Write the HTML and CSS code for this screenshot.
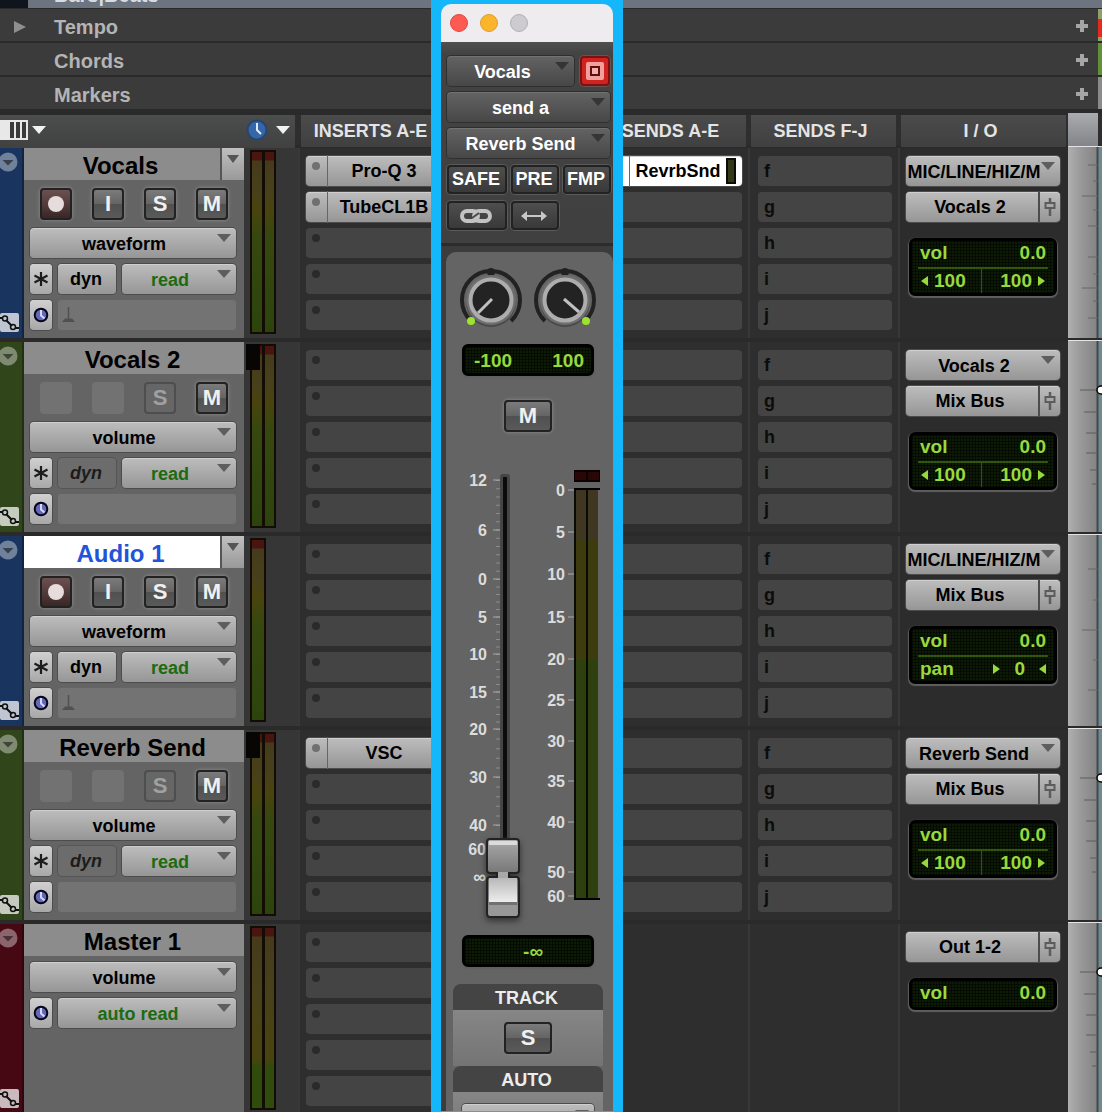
FILE: index.html
```html
<!DOCTYPE html>
<html lang="en">
<head>
    <meta charset="UTF-8">
    <meta name="viewport" content="width=device-width, initial-scale=1.0">
    <title>Session - Edit Window</title>
    <link rel="stylesheet" href="styles.css">
</head>
<body>

    <!-- shared icons -->
    <svg class="defs" width="0" height="0" aria-hidden="true">
        <symbol id="i-collapse" viewBox="0 0 20 20">
            <circle cx="10" cy="10" r="9.5" fill="#fff" fill-opacity=".38"/>
            <path d="M4.500 8h11l-5.500 5.500z" fill="#000" fill-opacity=".5"/>
        </symbol>
        <symbol id="i-auto" viewBox="0 0 20 20">
            <rect width="19" height="19" rx="2" fill="#fff" fill-opacity=".72"/>
            <path d="M0 5h3M6 7l6 6M15 15h4" fill="none" stroke="#111" stroke-width="2"/>
            <circle cx="5" cy="5.500" r="2.500" fill="none" stroke="#111" stroke-width="1.500"/>
            <circle cx="13" cy="14" r="2.500" fill="none" stroke="#111" stroke-width="1.500"/>
        </symbol>
        <symbol id="i-star" viewBox="0 0 16 16">
            <path d="M8 1v14M1.500 4.500l13 7M14.500 4.500l-13 7" stroke="#1c1c1c" stroke-width="2.200"/>
        </symbol>
        <symbol id="i-clock" viewBox="0 0 16 16">
            <circle cx="8" cy="8" r="6.300" fill="#6468b4" stroke="#04041c" stroke-width="2"/>
            <path d="M8 3v5.500l3.500 3" fill="none" stroke="#d5d7ff" stroke-width="2"/>
        </symbol>
        <symbol id="i-rec" viewBox="0 0 18 18"><circle cx="9" cy="9" r="8" fill="#e6dcdc"/></symbol>
        <symbol id="i-metro" viewBox="0 0 16 18">
            <path d="M7.500 1v12" stroke="#505050" stroke-width="1.500"/>
            <path d="M4 12.500h7l3 3.500H1z" fill="#505050"/>
        </symbol>
        <symbol id="i-fader" viewBox="0 0 12 20">
            <path d="M6 1v18" stroke="#5c5c5c" stroke-width="2.500"/>
            <rect x="1.500" y="6" width="9" height="5" fill="#a8a8a8" stroke="#5c5c5c" stroke-width="2"/>
        </symbol>
        <symbol id="i-left" viewBox="0 0 7 10"><path d="M7 0v10L0 5z" fill="#98d93c"/></symbol>
        <symbol id="i-right" viewBox="0 0 7 10"><path d="M0 0v10l7-5z" fill="#98d93c"/></symbol>
        <symbol id="i-plus" viewBox="0 0 12 12"><path d="M6 0v12M0 6h12" stroke="#a6a6a6" stroke-width="4"/></symbol>
        <symbol id="i-down" viewBox="0 0 14 8"><path d="M0 0h14L7 8z" fill="#f2f2f2"/></symbol>
        <symbol id="i-wave-ruler" viewBox="0 0 34 190">
            <path d="M20 18h10M25 34h5M14 49h16M25 63h5M20 79h10M20 110h10M25 127h5M14 141h16M25 154h5M20 171h10" stroke="#666" stroke-width="1"/>
        </symbol>
        <symbol id="i-vol-ruler" viewBox="0 0 34 190">
            <path d="M12 49h18M16 71h14M18 92h12M18 112h12M22 129h8M24 143h6" stroke="#5c5c5c" stroke-width="1"/>
            <circle cx="33" cy="49" r="4" fill="#fff" stroke="#000" stroke-width="1.500"/>
        </symbol>
    </svg>

    <div class="rulers">
        <div class="ruler ruler-top"><span class="ruler-name">Bars|Beats</span></div>
        <div class="ruler">
            <button class="twist" aria-label="Expand tempo"><svg width="12" height="12" viewBox="0 0 12 12"><path d="M0 0v12l12-6z" fill="#8f8f8f"/></svg></button>
            <span class="ruler-name">Tempo</span>
            <button class="add" aria-label="Add tempo"><svg width="12" height="12"><use href="#i-plus"/></svg></button>
            <span class="edge edge-red"></span>
        </div>
        <div class="ruler">
            <span class="ruler-name">Chords</span>
            <button class="add" aria-label="Add chord"><svg width="12" height="12"><use href="#i-plus"/></svg></button>
            <span class="edge edge-green"></span>
        </div>
        <div class="ruler">
            <span class="ruler-name">Markers</span>
            <button class="add" aria-label="Add marker"><svg width="12" height="12"><use href="#i-plus"/></svg></button>
            <span class="edge"></span>
        </div>
    </div>

    <div class="row head">
        <div class="head-tools">
            <button aria-label="Track list view"><svg width="46" height="20" viewBox="0 0 46 20">
                <rect width="28" height="20" fill="#e8e8e8"/>
                <path d="M12 2v16M18 2v16M24 2v16" stroke="#3a3a3a" stroke-width="4"/>
                <path d="M32 6h14l-7 8z" fill="#f2f2f2"/>
            </svg></button>
            <button class="timebase" aria-label="Timebase"><svg width="22" height="22" viewBox="0 0 22 22">
                <circle cx="11" cy="11" r="9.500" fill="#3566a8" stroke="#26466f" stroke-width="2"/>
                <path d="M11 4v7l4 4" fill="none" stroke="#dce9ff" stroke-width="2"/>
            </svg></button>
            <button class="edit-menu" aria-label="Edit window menu"><svg width="14" height="8"><use href="#i-down"/></svg></button>
        </div>
        <div class="head-cell">INSERTS A-E</div>
        <div class="head-cell"></div>
        <div class="head-cell">SENDS A-E</div>
        <div class="head-cell">SENDS F-J</div>
        <div class="head-cell">I / O</div>
        <div class="head-end"></div>
    </div>

    <div class="row track blue">
        <div class="tab"><svg width="20" height="20"><use href="#i-collapse"/></svg><svg width="20" height="20"><use href="#i-auto"/></svg></div>
        <div class="strip">
            <div class="title"><span>Vocals</span><button class="title-menu" aria-label="Playlist"></button></div>
            <div class="keys">
                <button class="key rec" aria-label="Record"><svg width="18" height="18"><use href="#i-rec"/></svg></button>
                <button class="key">I</button>
                <button class="key">S</button>
                <button class="key">M</button>
            </div>
            <div class="line"><select class="pick" aria-label="Track view"><option>waveform</option></select></div>
            <div class="line">
                <button class="chip small" aria-label="Freeze"><svg width="16" height="16"><use href="#i-star"/></svg></button>
                <button class="chip dyn">dyn</button>
                <select class="pick green" aria-label="Automation mode"><option>read</option></select>
            </div>
            <div class="line">
                <button class="chip small" aria-label="Timebase"><svg width="16" height="16"><use href="#i-clock"/></svg></button>
                <div class="well"><svg width="16" height="18"><use href="#i-metro"/></svg></div>
            </div>
        </div>
        <div class="meter"><i></i><i></i></div>
        <div class="slots inserts">
            <button class="slot full"><span>Pro-Q 3</span></button>
            <button class="slot full"><span>TubeCL1B</span></button>
            <button class="slot" aria-label="Insert c"></button>
            <button class="slot" aria-label="Insert d"></button>
            <button class="slot" aria-label="Insert e"></button>
        </div>
        <div class="slots"></div>
        <div class="slots">
            <button class="slot full send"><span>RevrbSnd</span><b></b></button>
            <button class="slot" aria-label="Send b"></button>
            <button class="slot" aria-label="Send c"></button>
            <button class="slot" aria-label="Send d"></button>
            <button class="slot" aria-label="Send e"></button>
        </div>
        <div class="slots letters">
            <button class="slot">f</button>
            <button class="slot">g</button>
            <button class="slot">h</button>
            <button class="slot">i</button>
            <button class="slot">j</button>
        </div>
        <div class="io">
            <select class="pick" aria-label="Input"><option>MIC/LINE/HIZ/M</option></select>
            <div class="output"><button>Vocals 2</button><button aria-label="Output window"><svg width="12" height="20"><use href="#i-fader"/></svg></button></div>
            <div class="lcd">
                <div class="lcd-line"><span>vol</span><span>0.0</span></div>
                <div class="lcd-line pans"><span><svg width="7" height="10"><use href="#i-left"/></svg>100</span><span>100<svg width="7" height="10"><use href="#i-right"/></svg></span></div>
            </div>
        </div>
        <div class="scale"><svg width="34" height="190"><use href="#i-wave-ruler"/></svg></div>
    </div>

    <div class="row track olive">
        <div class="tab"><svg width="20" height="20"><use href="#i-collapse"/></svg><svg width="20" height="20"><use href="#i-auto"/></svg></div>
        <div class="strip">
            <div class="title"><span>Vocals 2</span></div>
            <div class="keys">
                <span class="blank"></span>
                <span class="blank"></span>
                <button class="key off">S</button>
                <button class="key">M</button>
            </div>
            <div class="line"><select class="pick" aria-label="Track view"><option>volume</option></select></div>
            <div class="line">
                <button class="chip small" aria-label="Freeze"><svg width="16" height="16"><use href="#i-star"/></svg></button>
                <button class="chip dyn off">dyn</button>
                <select class="pick green" aria-label="Automation mode"><option>read</option></select>
            </div>
            <div class="line">
                <button class="chip small" aria-label="Timebase"><svg width="16" height="16"><use href="#i-clock"/></svg></button>
                <div class="well"></div>
            </div>
        </div>
        <div class="meter notched"><i></i><i></i></div>
        <div class="slots inserts">
            <button class="slot" aria-label="Insert a"></button>
            <button class="slot" aria-label="Insert b"></button>
            <button class="slot" aria-label="Insert c"></button>
            <button class="slot" aria-label="Insert d"></button>
            <button class="slot" aria-label="Insert e"></button>
        </div>
        <div class="slots"></div>
        <div class="slots">
            <button class="slot" aria-label="Send a"></button>
            <button class="slot" aria-label="Send b"></button>
            <button class="slot" aria-label="Send c"></button>
            <button class="slot" aria-label="Send d"></button>
            <button class="slot" aria-label="Send e"></button>
        </div>
        <div class="slots letters">
            <button class="slot">f</button>
            <button class="slot">g</button>
            <button class="slot">h</button>
            <button class="slot">i</button>
            <button class="slot">j</button>
        </div>
        <div class="io">
            <select class="pick" aria-label="Input"><option>Vocals 2</option></select>
            <div class="output"><button>Mix Bus</button><button aria-label="Output window"><svg width="12" height="20"><use href="#i-fader"/></svg></button></div>
            <div class="lcd">
                <div class="lcd-line"><span>vol</span><span>0.0</span></div>
                <div class="lcd-line pans"><span><svg width="7" height="10"><use href="#i-left"/></svg>100</span><span>100<svg width="7" height="10"><use href="#i-right"/></svg></span></div>
            </div>
        </div>
        <div class="scale"><svg width="34" height="190"><use href="#i-vol-ruler"/></svg></div>
    </div>

    <div class="row track blue selected">
        <div class="tab"><svg width="20" height="20"><use href="#i-collapse"/></svg><svg width="20" height="20"><use href="#i-auto"/></svg></div>
        <div class="strip">
            <div class="title"><span>Audio 1</span><button class="title-menu" aria-label="Playlist"></button></div>
            <div class="keys">
                <button class="key rec" aria-label="Record"><svg width="18" height="18"><use href="#i-rec"/></svg></button>
                <button class="key">I</button>
                <button class="key">S</button>
                <button class="key">M</button>
            </div>
            <div class="line"><select class="pick" aria-label="Track view"><option>waveform</option></select></div>
            <div class="line">
                <button class="chip small" aria-label="Freeze"><svg width="16" height="16"><use href="#i-star"/></svg></button>
                <button class="chip dyn">dyn</button>
                <select class="pick green" aria-label="Automation mode"><option>read</option></select>
            </div>
            <div class="line">
                <button class="chip small" aria-label="Timebase"><svg width="16" height="16"><use href="#i-clock"/></svg></button>
                <div class="well"><svg width="16" height="18"><use href="#i-metro"/></svg></div>
            </div>
        </div>
        <div class="meter mono"><i></i></div>
        <div class="slots inserts">
            <button class="slot" aria-label="Insert a"></button>
            <button class="slot" aria-label="Insert b"></button>
            <button class="slot" aria-label="Insert c"></button>
            <button class="slot" aria-label="Insert d"></button>
            <button class="slot" aria-label="Insert e"></button>
        </div>
        <div class="slots"></div>
        <div class="slots">
            <button class="slot" aria-label="Send a"></button>
            <button class="slot" aria-label="Send b"></button>
            <button class="slot" aria-label="Send c"></button>
            <button class="slot" aria-label="Send d"></button>
            <button class="slot" aria-label="Send e"></button>
        </div>
        <div class="slots letters">
            <button class="slot">f</button>
            <button class="slot">g</button>
            <button class="slot">h</button>
            <button class="slot">i</button>
            <button class="slot">j</button>
        </div>
        <div class="io">
            <select class="pick" aria-label="Input"><option>MIC/LINE/HIZ/M</option></select>
            <div class="output"><button>Mix Bus</button><button aria-label="Output window"><svg width="12" height="20"><use href="#i-fader"/></svg></button></div>
            <div class="lcd">
                <div class="lcd-line"><span>vol</span><span>0.0</span></div>
                <div class="lcd-line pan"><span>pan</span><span class="center"><svg width="7" height="10"><use href="#i-right"/></svg>0<svg width="7" height="10"><use href="#i-left"/></svg></span></div>
            </div>
        </div>
        <div class="scale"><svg width="34" height="190" viewBox="0 0 34 190"><path d="M20 34h10M25 65h5M14 95h16M25 125h5M20 155h10" stroke="#666"/></svg></div>
    </div>

    <div class="row track olive">
        <div class="tab"><svg width="20" height="20"><use href="#i-collapse"/></svg><svg width="20" height="20"><use href="#i-auto"/></svg></div>
        <div class="strip">
            <div class="title"><span>Reverb Send</span></div>
            <div class="keys">
                <span class="blank"></span>
                <span class="blank"></span>
                <button class="key off">S</button>
                <button class="key">M</button>
            </div>
            <div class="line"><select class="pick" aria-label="Track view"><option>volume</option></select></div>
            <div class="line">
                <button class="chip small" aria-label="Freeze"><svg width="16" height="16"><use href="#i-star"/></svg></button>
                <button class="chip dyn off">dyn</button>
                <select class="pick green" aria-label="Automation mode"><option>read</option></select>
            </div>
            <div class="line">
                <button class="chip small" aria-label="Timebase"><svg width="16" height="16"><use href="#i-clock"/></svg></button>
                <div class="well"></div>
            </div>
        </div>
        <div class="meter notched"><i></i><i></i></div>
        <div class="slots inserts">
            <button class="slot full"><span>VSC</span></button>
            <button class="slot" aria-label="Insert b"></button>
            <button class="slot" aria-label="Insert c"></button>
            <button class="slot" aria-label="Insert d"></button>
            <button class="slot" aria-label="Insert e"></button>
        </div>
        <div class="slots"></div>
        <div class="slots">
            <button class="slot" aria-label="Send a"></button>
            <button class="slot" aria-label="Send b"></button>
            <button class="slot" aria-label="Send c"></button>
            <button class="slot" aria-label="Send d"></button>
            <button class="slot" aria-label="Send e"></button>
        </div>
        <div class="slots letters">
            <button class="slot">f</button>
            <button class="slot">g</button>
            <button class="slot">h</button>
            <button class="slot">i</button>
            <button class="slot">j</button>
        </div>
        <div class="io">
            <select class="pick" aria-label="Input"><option>Reverb Send</option></select>
            <div class="output"><button>Mix Bus</button><button aria-label="Output window"><svg width="12" height="20"><use href="#i-fader"/></svg></button></div>
            <div class="lcd">
                <div class="lcd-line"><span>vol</span><span>0.0</span></div>
                <div class="lcd-line pans"><span><svg width="7" height="10"><use href="#i-left"/></svg>100</span><span>100<svg width="7" height="10"><use href="#i-right"/></svg></span></div>
            </div>
        </div>
        <div class="scale"><svg width="34" height="190"><use href="#i-vol-ruler"/></svg></div>
    </div>

    <div class="row track maroon">
        <div class="tab"><svg width="20" height="20"><use href="#i-collapse"/></svg><svg width="20" height="20"><use href="#i-auto"/></svg></div>
        <div class="strip">
            <div class="title"><span>Master 1</span></div>
            <div class="line"><select class="pick" aria-label="Track view"><option>volume</option></select></div>
            <div class="line">
                <button class="chip small" aria-label="Timebase"><svg width="16" height="16"><use href="#i-clock"/></svg></button>
                <select class="pick green" aria-label="Automation mode"><option>auto read</option></select>
            </div>
        </div>
        <div class="meter master"><i></i><i></i></div>
        <div class="slots inserts">
            <button class="slot" aria-label="Insert a"></button>
            <button class="slot" aria-label="Insert b"></button>
            <button class="slot" aria-label="Insert c"></button>
            <button class="slot" aria-label="Insert d"></button>
            <button class="slot" aria-label="Insert e"></button>
        </div>
        <div class="slots"></div>
        <div class="slots"></div>
        <div class="slots"></div>
        <div class="io">
            <div class="output"><button>Out 1-2</button><button aria-label="Output window"><svg width="12" height="20"><use href="#i-fader"/></svg></button></div>
            <div class="lcd">
                <div class="lcd-line"><span>vol</span><span>0.0</span></div>
            </div>
        </div>
        <div class="scale"><svg width="34" height="190"><use href="#i-vol-ruler"/></svg></div>
    </div>

    <!-- floating send window -->
    <div class="send-window">
        <div class="titlebar">
            <button class="light close" aria-label="Close"></button>
            <button class="light min" aria-label="Minimize"></button>
            <button class="light" aria-label="Zoom"></button>
        </div>
        <div class="send-head">
            <div class="send-line">
                <select class="pick dark" aria-label="Track"><option>Vocals</option></select>
                <button class="target" aria-label="Target"><svg width="18" height="18" viewBox="0 0 18 18"><rect width="18" height="18" rx="2" fill="#f2a09c"/><rect x="5" y="5" width="8" height="8" fill="#f4b0ac" stroke="#5e0f0f" stroke-width="2"/></svg></button>
            </div>
            <select class="pick dark" aria-label="Send"><option>send a</option></select>
            <select class="pick dark" aria-label="Send output"><option>Reverb Send</option></select>
            <div class="toggles">
                <button>SAFE</button>
                <button>PRE</button>
                <button>FMP</button>
                <button aria-label="Link"><svg width="32" height="16" viewBox="0 0 32 16"><g fill="none" stroke="#c2c2c2" stroke-width="4"><rect x="2" y="3" width="16" height="10" rx="5"/><rect x="14" y="3" width="16" height="10" rx="5"/></g><path d="M12 10l7-5" stroke="#4a4a4a" stroke-width="2"/></svg></button>
                <button aria-label="Pan link"><svg width="26" height="12" viewBox="0 0 26 12"><path d="M3 6h20" stroke="#c8c8c8" stroke-width="2"/><path d="M6 1v10L0 6zM20 1v10l6-5z" fill="#c8c8c8"/></svg></button>
            </div>
        </div>
        <div class="panel">
            <div class="knobs">
                <svg width="64" height="64" viewBox="0 0 64 64" role="img" aria-label="Pan left">
                    <circle cx="32" cy="34" r="25" fill="#4a4a4a"/>
                    <path d="M12 53A29 29 0 1 1 52 53" fill="none" stroke="#222" stroke-width="4"/>
                    <circle cx="32" cy="4" r="4" fill="#222"/>
                    <circle cx="32" cy="32" r="25" fill="#6f6f6f"/>
                    <circle cx="32" cy="32" r="20.500" fill="#232323" stroke="#adadad" stroke-width="4"/>
                    <path d="M33 31L19 45" stroke="#c0c0c0" stroke-width="3"/>
                    <circle cx="12" cy="53" r="4" fill="#9be32e"/>
                </svg>
                <svg width="64" height="64" viewBox="0 0 64 64" role="img" aria-label="Pan right">
                    <circle cx="32" cy="34" r="25" fill="#4a4a4a"/>
                    <path d="M12 53A29 29 0 1 1 52 53" fill="none" stroke="#222" stroke-width="4"/>
                    <circle cx="32" cy="4" r="4" fill="#222"/>
                    <circle cx="32" cy="32" r="25" fill="#6f6f6f"/>
                    <circle cx="32" cy="32" r="20.500" fill="#232323" stroke="#adadad" stroke-width="4"/>
                    <path d="M31 31L46 44" stroke="#c0c0c0" stroke-width="3"/>
                    <circle cx="53" cy="53" r="4" fill="#9be32e"/>
                </svg>
            </div>
            <div class="lcd readout"><span>-100</span><span>100</span></div>
            <button class="key wide mute">M</button>
            <div class="fader">
                <svg width="164" height="460" viewBox="446 464 164 460">
                    <g stroke="#8c8c8c" stroke-width="4" fill="none">
                        <path d="M498 480V579" stroke-dasharray="1 7.250"/>
                        <path d="M498 579V729" stroke-dasharray="1 6.500"/>
                        <path d="M498 729V826" stroke-dasharray="1 8.600"/>
                    </g>
                    <path d="M493 480h8M493 530h8M493 579h8M493 617h8M493 654h8M493 692h8M493 729h8M493 777h8M493 825h8M568 490h6M568 532h6M568 574h6M568 617h6M568 659h6M568 700h6M568 741h6M568 781h6M568 822h6M568 872h6M568 896h6" stroke="#a8a8a8" stroke-width="1"/>
                    <rect x="500" y="474" width="10" height="440" rx="3" fill="#454545"/>
                    <rect x="503" y="477" width="4" height="436" fill="#0c0c0c"/>
                    <g class="marks">
                        <text x="487" y="486">12</text><text x="487" y="536">6</text><text x="487" y="585">0</text>
                        <text x="487" y="623">5</text><text x="487" y="660">10</text><text x="487" y="698">15</text>
                        <text x="487" y="735">20</text><text x="487" y="783">30</text><text x="487" y="831">40</text>
                        <text x="486" y="855">60</text><text x="486" y="883" class="inf">∞</text>
                        <text x="565" y="496">0</text><text x="565" y="538">5</text><text x="565" y="580">10</text>
                        <text x="565" y="623">15</text><text x="565" y="665">20</text><text x="565" y="706">25</text>
                        <text x="565" y="747">30</text><text x="565" y="787">35</text><text x="565" y="828">40</text>
                        <text x="565" y="878">50</text><text x="565" y="902">60</text>
                    </g>
                    <rect x="574" y="470" width="26" height="12" fill="#0c0000"/>
                    <rect x="575" y="472" width="11" height="8" fill="#2a0707"/><rect x="588" y="472" width="11" height="8" fill="#2a0707"/>
                    <path d="M574 489h26" stroke="#000" stroke-width="2"/>
                    <rect x="574" y="490" width="24" height="410" fill="#0a0a04"/>
                    <path d="M574 899h26" stroke="#000" stroke-width="2"/>
                    <path d="M576 490h10v50h-10zM588 490h10v50h-10z" fill="#3f3722"/>
                    <path d="M576 540h10v120h-10zM588 540h10v120h-10z" fill="#3d3c0e"/>
                    <path d="M576 660h10v238h-10zM588 660h10v238h-10z" fill="#2e3f10"/>
                </svg>
                <input type="range" min="0" max="100" value="0" aria-label="Send level">
            </div>
            <div class="lcd readout level"><span>-∞</span></div>
            <div class="group">
                <h2>TRACK</h2>
                <div class="group-body"><button class="key wide">S</button></div>
                <h2>AUTO</h2>
                <div class="group-body"><select class="pick" aria-label="Send automation mode"><option>read</option></select></div>
            </div>
        </div>
    </div>

</body>
</html>
```
FILE: styles.css
```css
* {
    box-sizing: border-box;
}

body {
    margin: 0;
    height: 100vh;
    overflow: hidden;
    position: relative;
    background-color: #2b2b2b;
    font-family: "Liberation Sans", Arial, sans-serif;
    font-size: 18px;
    font-weight: bold;
    color: #000;
}

button, select, input {
    font: inherit;
    color: inherit;
    margin: 0;
    padding: 0;
    border: none;
    background: none;
}

svg {
    display: block;
    flex: none;
}

.defs {
    position: absolute;
}

/* rulers */
.ruler {
    display: flex;
    align-items: center;
    height: 34px;
    background-color: #3b3b3b;
    border-bottom: 2px solid #2a2a2a;
    color: #b4b4b4;
    font-size: 20px;
    line-height: 26px;
}

.ruler-top {
    height: 9px;
    align-items: flex-end;
    overflow: hidden;
    background: linear-gradient(90deg, #10151d 28px, #6c7480 28px);
    border-bottom: 1px solid #2a2a2a;
    color: #d8dce2;
}

.ruler-name {
    flex: 1;
    padding: 3px 0 0 54px;
}

.twist {
    width: 54px;
    padding: 3px 0 0 14px;
}

.twist + .ruler-name {
    padding-left: 0;
}

.add {
    margin-right: 10px;
    padding-top: 2px;
}

.edge {
    width: 4px;
    height: 100%;
    background-color: #8b8b8b;
}

.edge-red {
    background: linear-gradient(#8fa06a 10px, #e8281c 10px, #e8281c 28px, #8fa06a 28px);
}

.edge-green {
    background-color: #62903a;
}

/* shared columns */
.row {
    display: grid;
    grid-template-columns: 24px 220px 54px repeat(4, 1fr) 170px 34px;
}

.head {
    border-top: 4px solid #2a2a2a;
    border-bottom: 3px solid #2a2a2a;
    background-color: #2e2e2e;
    height: 37px;
}

.head-tools {
    grid-column: span 3;
    display: flex;
    align-items: center;
    background: linear-gradient(#4c4d4d, #414141);
    margin-right: 3px;
    padding-bottom: 4px;
}

.timebase {
    margin-left: auto;
}

.edit-menu {
    margin: 0 5px 0 8px;
}

.head-cell {
    margin: 0 2px 1px 3px;
    padding-right: 6px;
    background: linear-gradient(#4b4b4b, #404040);
    color: #e4e4e4;
    text-align: center;
    line-height: 32px;
}

.head-end {
    background: linear-gradient(#aaacaf, #7f8286);
    margin: -2px 4px 0 0;
}

/* tracks */
.track {
    min-height: 194px;
    border-bottom: 4px solid #2a2a2a;
}

.tab {
    display: flex;
    flex-direction: column;
    justify-content: space-between;
    padding: 4px 0 5px;
    border-right: 2px solid rgba(0, 0, 0, 0.3);
}

.tab svg:first-child {
    margin-left: -2px;
}

.blue .tab {
    background-color: #19345f;
}

.olive .tab {
    background-color: #30451a;
}

.maroon .tab {
    background-color: #460813;
}

.strip {
    display: flex;
    flex-direction: column;
    gap: 6px;
    background-color: #646464;
}

.title {
    display: flex;
    height: 32px;
    background-color: #8c8c8c;
    font-size: 24px;
    line-height: 36px;
    text-align: center;
}

.title span {
    flex: 1;
    padding-right: 3px;
}

.selected .title {
    background-color: #fff;
    color: #2353d8;
}

.title-menu {
    width: 24px;
    border-left: 2px solid #555;
    background: url("data:image/svg+xml,%3Csvg xmlns='http://www.w3.org/2000/svg' width='12' height='8'%3E%3Cpath d='M0 0h12l-6 8z' fill='%23555'/%3E%3C/svg%3E") no-repeat 5px 7px, linear-gradient(#c0c0c0, #999);
}

.keys {
    display: flex;
    gap: 20px;
    padding: 2px 16px;
}

.key {
    display: flex;
    align-items: center;
    justify-content: center;
    width: 32px;
    height: 32px;
    border: 2px solid #222;
    border-radius: 4px;
    background: linear-gradient(#7b7b7b, #646464 50%, #505050 50%, #5a5a5a);
    box-shadow: 0 0 3px 1px #808080;
    color: #f0f0f0;
    font-size: 22px;
    line-height: 28px;
}

.key.rec {
    background: linear-gradient(#6d5050, #3a2626);
}

.key.off {
    border-color: #4e4e4e;
    background: #666;
    color: #a0a0a0;
    box-shadow: none;
}

.key.wide {
    width: 48px;
}

.blank {
    width: 32px;
    height: 32px;
    border-radius: 4px;
    background-color: #727272;
}

.line {
    display: flex;
    gap: 6px;
    padding: 0 8px 0 6px;
}

.pick, .chip, .output button, .slot.full {
    height: 30px;
    border-radius: 4px;
    background: linear-gradient(#bdbdbd, #969696);
    box-shadow: 0 0 0 1px #4c4c4c, inset 0 1px 0 #cfcfcf;
}

.pick {
    flex: 1;
    width: 100%;
    min-width: 0;
    appearance: none;
    padding: 1px 18px 0 0;
    text-align: center;
    text-align-last: center;
    background: url("data:image/svg+xml,%3Csvg xmlns='http://www.w3.org/2000/svg' width='14' height='8'%3E%3Cpath d='M0 0h14l-7 8z' fill='%235e5e5e'/%3E%3C/svg%3E") no-repeat right 5px top 6px, linear-gradient(#bdbdbd, #969696);
}

.pick.green {
    color: #1c6a12;
}

.chip {
    display: flex;
    align-items: center;
    justify-content: center;
}

.small {
    width: 22px;
    background: linear-gradient(#d0d0d0, #a8a8a8);
}

.dyn {
    width: 58px;
    padding: 1px 2px 0 0;
}

.dyn.off {
    background: #6c6c6c;
    box-shadow: 0 0 0 1px #555;
    color: #1c1c1c;
    font-style: italic;
}

.well {
    flex: 1;
    display: flex;
    align-items: center;
    padding-left: 3px;
    border-radius: 3px;
    background-color: #737373;
}

/* track meters */
.meter {
    position: relative;
    display: flex;
    padding: 2px 22px 4px 6px;
    background-color: #363636;
}

.meter i {
    flex: 1;
    border: 2px solid #120c04;
    border-width: 2px 1px 2px 2px;
    background: linear-gradient(#4a1410 8px, #453b1c 9px, #48401a 40px, #48440e 60px, #36480f 84px, #2c440c);
}

.meter i:last-child {
    border-right-width: 2px;
}

.meter.mono {
    padding-right: 32px;
}

.meter.master i {
    background: linear-gradient(#4a1410 8px, #453b1c 9px, #48401a 60px, #48440e 132px, #304c0c 138px);
}

.notched::before {
    content: "";
    position: absolute;
    left: 2px;
    top: 2px;
    width: 14px;
    height: 26px;
    background-color: #080604;
}

/* inserts and sends */
.slots {
    display: flex;
    flex-direction: column;
    gap: 6px;
    padding: 8px 6px 0 8px;
    border-left: 2px solid #383838;
    background-color: #2e2e2e;
}

.inserts {
    padding-left: 6px;
}

.slot {
    position: relative;
    height: 30px;
    border-radius: 4px;
    background-color: #444;
    text-align: left;
}

.letters .slot {
    padding: 1px 0 0 6px;
    color: #0c0c0c;
}

.inserts .slot::before {
    content: "";
    position: absolute;
    left: 6px;
    top: 6px;
    width: 8px;
    height: 8px;
    border-radius: 50%;
    background-color: #2a2a2a;
}

.inserts .slot.full::before {
    background-color: #707070;
}

.slot.full {
    display: flex;
    align-items: center;
    padding-left: 21px;
}

.slot.full span {
    flex: 1;
    border-left: 1px solid #666;
    padding-right: 2px;
    line-height: 32px;
    text-align: center;
}

.slot.send {
    background: #fff;
    padding-right: 6px;
}

.slot.send span {
    padding-right: 0;
}

.slot.send b {
    width: 10px;
    height: 26px;
    border: 2px solid #0c0c04;
    background-color: #34391a;
}

/* i/o */
.io {
    display: flex;
    flex-direction: column;
    gap: 6px;
    padding: 8px 8px 0 6px;
    border-left: 2px solid #383838;
    background-color: #2c2c2c;
}

.io .pick {
    flex: none;
}

.output {
    display: flex;
    gap: 2px;
}

.output button:first-child {
    flex: 1;
    padding: 1px 4px 0 0;
    border-radius: 4px 0 0 4px;
}

.output button:last-child {
    width: 20px;
    padding-left: 4px;
    border-radius: 0 4px 4px 0;
}

.lcd {
    border: 3px solid #000;
    border-radius: 6px;
    background-color: #0d1a06;
    background-image: linear-gradient(rgba(0, 0, 0, 0.5) 1px, transparent 1px), linear-gradient(90deg, rgba(0, 0, 0, 0.5) 1px, transparent 1px);
    background-size: 3px 3px;
    box-shadow: 0 1px 1px 1px #606060;
    color: #98d93c;
    font-size: 19px;
}

.io .lcd {
    margin: 10px 3px 0;
    padding: 0 6px;
}

.lcd-line {
    display: flex;
    justify-content: space-between;
    height: 26px;
    padding: 0 2px;
    line-height: 24px;
}

.lcd-line + .lcd-line {
    border-top: 2px solid #34530f;
}

.lcd-line.pans {
    padding: 0;
}

.pans span, .center {
    display: flex;
    align-items: center;
    gap: 6px;
}

.pans span {
    flex: 1;
    padding-left: 3px;
}

.pans span + span {
    justify-content: flex-end;
    padding-right: 3px;
    border-left: 1px solid #34530f;
}

.lcd-line .center {
    gap: 14px;
}

.scale {
    border-top: 1px solid #e4e4e4;
    background: linear-gradient(90deg, #b0b0b0, #9a9a9a 12px, #858585 28px, #3f4a50 29px, #3f4a50 30px, #71898f 31px);
    margin-top: -2px;
}

/* floating send window, the dark part is the gutter beside the panel */
.send-window {
    position: absolute;
    left: 431px;
    top: 0;
    width: 192px;
    height: 100vh;
    overflow: hidden;
    border: 10px solid #14b8fa;
    border-width: 4px 10px 1px;
    background: linear-gradient(#14b8fa 40px, #3c3c3c 40px);
}

.titlebar {
    display: flex;
    align-items: center;
    gap: 12px;
    height: 38px;
    padding-left: 9px;
    border-radius: 10px 10px 0 0;
    background-color: #efecf0;
}

.light {
    width: 18px;
    height: 18px;
    border: 1px solid #b3b1b5;
    border-radius: 50%;
    background-color: #cdcbcf;
}

.light.close {
    border-color: #e2463f;
    background-color: #fe5a52;
}

.light.min {
    border-color: #dd9e26;
    background-color: #fbb52c;
}

.send-head {
    display: flex;
    flex-direction: column;
    gap: 6px;
    height: 204px;
    padding: 14px 3px 0 6px;
    border-bottom: 3px solid #2c2c2c;
    background: linear-gradient(#505050, #434343 12px, #404040);
}

.send-line {
    display: flex;
    gap: 6px;
}

.pick.dark {
    flex: none;
    padding-right: 16px;
    color: #fff;
    background: url("data:image/svg+xml,%3Csvg xmlns='http://www.w3.org/2000/svg' width='14' height='8'%3E%3Cpath d='M0 0h14l-7 8z' fill='%23353535'/%3E%3C/svg%3E") no-repeat right 5px top 6px, linear-gradient(#636363, #474747);
    box-shadow: 0 0 0 1px #2f2f2f, inset 0 1px 0 #727272;
}

.send-line .pick.dark {
    flex: 1;
}

.target {
    display: flex;
    align-items: center;
    justify-content: center;
    width: 30px;
    height: 30px;
    border: 2px solid #7c1210;
    border-radius: 4px;
    background-color: #cf2322;
    box-shadow: 0 0 0 1px #6b5252;
}

.toggles {
    display: grid;
    grid-template-columns: 60px 48px 48px;
    gap: 7px 4px;
    margin-top: 1px;
}

.toggles button {
    display: flex;
    align-items: center;
    justify-content: center;
    height: 29px;
    border: 2px solid #222;
    border-radius: 4px;
    padding-right: 2px;
    background: linear-gradient(#4e4e4e, #393939);
    box-shadow: 0 0 0 1px #5a5a5a;
    color: #fff;
}

.panel {
    display: flex;
    flex-direction: column;
    align-items: center;
    padding: 16px 3px 0 0;
    border-radius: 10px 10px 0 0;
    background-color: #646464;
    margin: 6px 0 0 5px;
}

.knobs {
    display: flex;
    gap: 10px;
}

.readout {
    display: flex;
    justify-content: space-between;
    width: 132px;
    height: 32px;
    margin-top: 12px;
    padding: 0 7px 0 9px;
    line-height: 28px;
}

.readout.level {
    justify-content: center;
    margin-top: 11px;
}

.readout.level span {
    padding-left: 8px;
}

.mute {
    margin-top: 24px;
}

.fader {
    display: grid;
    margin-top: 32px;
}

.fader svg, .fader input {
    grid-area: 1 / 1;
}

.marks {
    fill: #dcdcdc;
    font-family: "Liberation Sans Narrow", "Liberation Sans", Arial, sans-serif;
    font-size: 16px;
    text-anchor: end;
}

.marks .inf {
    font-size: 18px;
}

.fader input {
    appearance: none;
    writing-mode: vertical-lr;
    direction: rtl;
    width: 34px;
    height: 444px;
    margin: 10px 0 0 40px;
}

.fader input::-webkit-slider-thumb {
    appearance: none;
    width: 34px;
    height: 80px;
    background: url("data:image/svg+xml,%3Csvg xmlns='http://www.w3.org/2000/svg' width='34' height='80'%3E%3Cdefs%3E%3ClinearGradient id='a' x2='0' y2='1'%3E%3Cstop stop-color='%23aaa'/%3E%3Cstop offset='.5' stop-color='%23707070'/%3E%3Cstop offset='1' stop-color='%23999'/%3E%3C/linearGradient%3E%3ClinearGradient id='b' x2='0' y2='1'%3E%3Cstop stop-color='%23b8b8b8'/%3E%3Cstop offset='1' stop-color='%23ededed'/%3E%3C/linearGradient%3E%3C/defs%3E%3Cpath d='M4 1h26q3 0 3 3v28q0 3-3 3h-7v4h7q3 0 3 3v33q0 4-3 4H4q-3 0-3-4V42q0-3 3-3h7v-4H4q-3 0-3-3V4q0-3 3-3z' fill='url(%23a)' stroke='%23222' stroke-width='2'/%3E%3Cpath d='M3 3h28v4H3z' fill='%23dcdcdc'/%3E%3Cpath d='M12 34h10v7H12z' fill='%23a8a8a8'/%3E%3Cpath d='M3 40h28v24H3z' fill='url(%23b)'/%3E%3Cpath d='M3 64h28v3H3z' fill='%23707070'/%3E%3Cpath d='M3 67h28v10H3z' fill='%23989898'/%3E%3C/svg%3E");
    filter: drop-shadow(0 3px 3px #333);
}

.group {
    width: 150px;
    margin-top: 17px;
}

.group h2 {
    margin: 0;
    padding-right: 3px;
    height: 26px;
    border-radius: 8px 8px 0 0;
    background-color: #444;
    color: #ececec;
    font-size: 18px;
    line-height: 28px;
    text-align: center;
}

.group-body {
    display: flex;
    justify-content: center;
    padding: 12px 9px;
    background: linear-gradient(#868686, #747474);
}
```
